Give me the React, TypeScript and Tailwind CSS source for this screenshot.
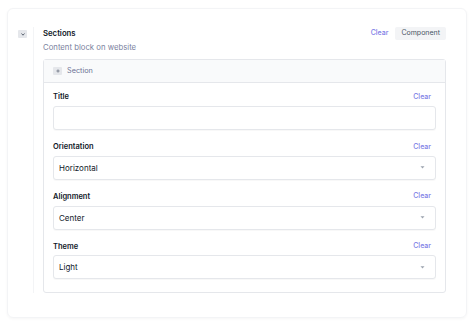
import React from 'react';

const font = { fontFamily: 'Inter, "Noto Sans", sans-serif' };

// tiny square toggle used for collapsing groups
const Toggle: React.FC<{ open?: boolean }> = ({ open = true }) => (
  <div className="flex h-[8px] w-[9px] items-center justify-center rounded-[1px] bg-gray-200">
    {open ? (
      <svg width="4" height="3" viewBox="0 0 4 3">
        <path d="M0.5 0.5 L2 2.2 L3.5 0.5" fill="none" stroke="#374151" strokeWidth="0.8" />
      </svg>
    ) : (
      <svg width="4" height="4" viewBox="0 0 4 4">
        <path d="M2 0.4 V3.6 M0.4 2 H3.6" fill="none" stroke="#6b7280" strokeWidth="0.8" />
      </svg>
    )}
  </div>
);

interface FieldProps {
  label: string;
  value?: string;
  select?: boolean;
}

const Field: React.FC<FieldProps> = ({ label, value, select }) => (
  <div className="flex flex-col">
    <div className="mb-[2px] flex h-[14px] items-center justify-between pr-[5px]">
      <span className="text-[7.5px] font-semibold text-gray-900">{label}</span>
      <span className="text-[7px] font-medium text-[#7e7ee6]">Clear</span>
    </div>
    <div className="flex h-[24px] items-center justify-between rounded-[3px] border border-gray-200 bg-white pl-[5px] pr-[10px] shadow-[0_1px_1px_rgba(0,0,0,0.03)]">
      <span className="text-[8px] text-gray-900">{value}</span>
      {select && (
        <svg width="5" height="3" viewBox="0 0 5 3">
          <path d="M0.5 0.3 L2.5 2.6 L4.5 0.3 Z" fill="#9ca3af" />
        </svg>
      )}
    </div>
  </div>
);

export default function App() {
  return (
    <div className="h-[324px] w-[474px] overflow-hidden bg-white pl-[7px] pt-[8px]" style={font}>
      <div className="h-[310px] w-[460px] rounded-[6px] border border-gray-100 pb-[26px] pl-[10px] pt-[18px] shadow-[0_1px_3px_rgba(0,0,0,0.04)]">
        <div className="flex">
          <div className="mt-[3px]">
            <Toggle />
          </div>
          <div className="ml-[6px] w-[413px] border-l border-gray-100 pl-[9px]">
            {/* Header */}
            <div className="flex items-start justify-between">
              <div className="flex flex-col">
                <span className="h-[12px] text-[7.75px] font-semibold leading-[12px] text-gray-900">Sections</span>
                <span className="mt-[2px] h-[12px] text-[7.75px] leading-[12px] text-[#7a7f9e]">
                  Content block on website
                </span>
              </div>
              <div className="flex items-center gap-[7px]">
                <span className="text-[7px] font-medium text-[#7e7ee6]">Clear</span>
                <span className="flex h-[13px] items-center rounded-[2px] bg-gray-100 px-[6px] text-[7px] text-gray-600">
                  Component
                </span>
              </div>
            </div>

            {/* Section card */}
            <div className="mt-[6px] w-[403px] rounded-[3px] border border-gray-200">
              <div className="flex h-[23px] items-center gap-[5px] border-b border-gray-200 bg-gray-50 pl-[9px]">
                <Toggle open={false} />
                <span className="text-[7.25px] text-[#6b7294]">Section</span>
              </div>
              <div className="flex flex-col gap-[9.75px] px-[9px] pb-[13px] pt-[7px]">
                <Field label="Title" />
                <Field label="Orientation" value="Horizontal" select />
                <Field label="Alignment" value="Center" select />
                <Field label="Theme" value="Light" select />
              </div>
            </div>
          </div>
        </div>
      </div>
    </div>
  );
}
